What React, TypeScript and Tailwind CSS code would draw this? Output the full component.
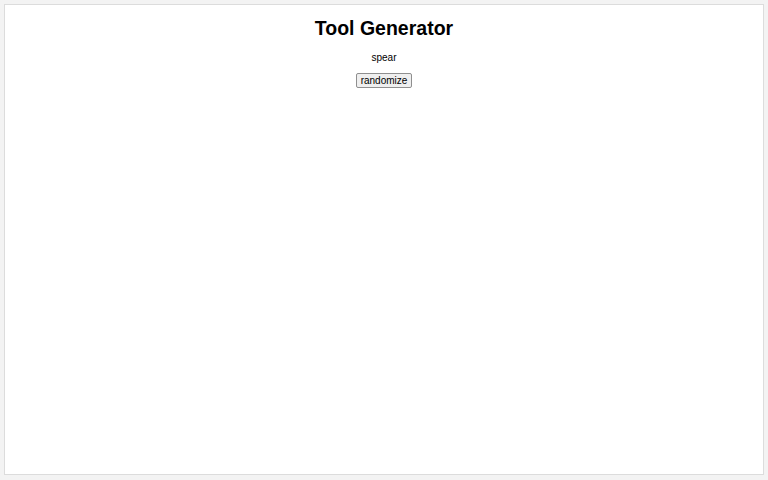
import { useState } from 'react';

const tools = ['spear', 'hammer', 'axe', 'saw', 'chisel', 'wrench', 'shovel'];

export default function App() {
  const [tool, setTool] = useState('spear');

  const randomize = () => {
    setTool(tools[Math.floor(Math.random() * tools.length)]);
  };

  return (
    <div className="h-[480px] w-[768px] bg-[#f3f3f3] p-[4px] font-['Liberation_Sans',Arial,sans-serif]">
      <div className="flex h-[471px] flex-col items-center border border-[#dcdcdc] bg-white">
        <h1 className="mt-[12px] text-[19.5px] font-bold leading-[23px] text-black">Tool Generator</h1>
        <p className="mt-[12px] text-[10px] leading-[12px] text-black">{tool}</p>
        <button
          onClick={randomize}
          className="mt-[9px] h-[15px] rounded-[2px] border border-[#8f8f8f] bg-[#efefef] px-[3.5px] text-[10px] leading-[12px] text-black"
        >
          randomize
        </button>
      </div>
    </div>
  );
}
